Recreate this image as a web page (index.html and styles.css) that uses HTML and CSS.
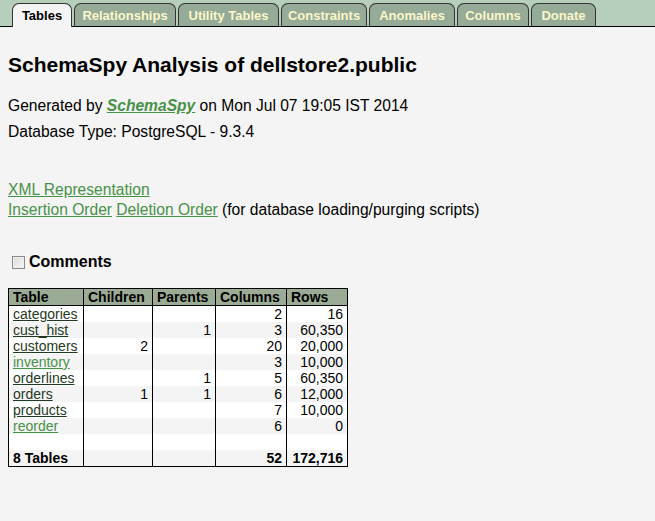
FILE: index.html
```html
<!DOCTYPE html>
<html>
<head>
<meta charset="utf-8">
<title>SchemaSpy Analysis of dellstore2.public</title>
<link rel="stylesheet" href="styles.css">
</head>
<body>
<div class="tabbar">
  <span class="tab active t-tables">Tables</span>
  <span class="tab t-rel">Relationships</span>
  <span class="tab t-util">Utility Tables</span>
  <span class="tab t-cons">Constraints</span>
  <span class="tab t-anom">Anomalies</span>
  <span class="tab t-cols">Columns</span>
  <span class="tab t-don">Donate</span>
</div>
<div class="content">
  <h2 class="title">SchemaSpy Analysis of dellstore2.public</h2>
  <div class="line gen">Generated by <a class="brand" href="#">SchemaSpy</a> on Mon Jul 07 19:05 IST 2014</div>
  <div class="line dbtype">Database Type: PostgreSQL - 9.3.4</div>
  <div class="links">
    <div><a href="#">XML Representation</a></div>
    <div><a href="#">Insertion Order</a> <a href="#">Deletion Order</a> (for database loading/purging scripts)</div>
  </div>
  <label class="comments"><span class="cb"></span>Comments</label>
  <table class="tables">
    <thead>
      <tr><th class="c1">Table</th><th class="c2">Children</th><th class="c3">Parents</th><th class="c4">Columns</th><th class="c5">Rows</th></tr>
    </thead>
    <tbody>
      <tr><td><a class="v" href="#">categories</a></td><td></td><td></td><td class="n">2</td><td class="n">16</td></tr>
      <tr class="alt"><td><a class="v" href="#">cust_hist</a></td><td></td><td class="n">1</td><td class="n">3</td><td class="n">60,350</td></tr>
      <tr><td><a class="v" href="#">customers</a></td><td class="n">2</td><td></td><td class="n">20</td><td class="n">20,000</td></tr>
      <tr class="alt"><td><a href="#">inventory</a></td><td></td><td></td><td class="n">3</td><td class="n">10,000</td></tr>
      <tr><td><a class="v" href="#">orderlines</a></td><td></td><td class="n">1</td><td class="n">5</td><td class="n">60,350</td></tr>
      <tr class="alt"><td><a class="v" href="#">orders</a></td><td class="n">1</td><td class="n">1</td><td class="n">6</td><td class="n">12,000</td></tr>
      <tr><td><a class="v" href="#">products</a></td><td></td><td></td><td class="n">7</td><td class="n">10,000</td></tr>
      <tr class="alt"><td><a href="#">reorder</a></td><td></td><td></td><td class="n">6</td><td class="n">0</td></tr>
      <tr><td>&nbsp;</td><td></td><td></td><td></td><td></td></tr>
      <tr class="alt total"><td>8 Tables</td><td></td><td></td><td class="n">52</td><td class="n">172,716</td></tr>
    </tbody>
  </table>
</div>
</body>
</html>
```
FILE: styles.css
```css
html, body {
  margin: 0;
  padding: 0;
  background: #f4f4f4;
  font-family: "Liberation Sans", Arial, sans-serif;
  color: #000;
}
.tabbar {
  background: #b5cfba;
  height: 26px;
  border-bottom: 1px solid #000;
  display: flex;
  align-items: flex-end;
  gap: 2px;
  padding-left: 12px;
}
.tab {
  height: 23px;
  box-sizing: border-box;
  padding: 4px 0 0;
  text-align: center;
  background: #95aa97;
  color: #fbf7c8;
  font-weight: bold;
  font-size: 13px;
  line-height: 16px;
  border: 1px solid #333;
  border-bottom: none;
  border-radius: 7px 7px 0 0;
}
.tab.active {
  background: #f4f4f4;
  color: #000;
  height: 24px;
  margin-bottom: -1px;
}
.t-tables { width: 60px; }
.t-rel { width: 102px; }
.t-util { width: 101px; }
.t-cons { width: 86px; }
.t-anom { width: 86px; }
.t-cols { width: 72px; }
.t-don { width: 65px; }
.content {
  padding: 0 8px;
}
.title {
  font-size: 21px;
  font-weight: bold;
  margin: 0;
  padding-top: 26px;
  line-height: 24px;
}
.line {
  font-size: 15.6px;
  line-height: 20px;
}
.gen { margin-top: 19px; }
.dbtype { margin-top: 6px; }
.links {
  font-size: 15.6px;
  line-height: 20px;
  margin-top: 38px;
}
a {
  color: #489148;
  text-decoration: underline;
}
a.brand {
  font-weight: bold;
  font-style: italic;
}
.comments {
  display: flex;
  align-items: center;
  font-weight: bold;
  font-size: 16px;
  line-height: 20px;
  margin-top: 32px;
  padding-left: 4px;
}
.cb {
  display: inline-block;
  width: 11px;
  height: 11px;
  border: 1px solid #8a8a8a;
  background: linear-gradient(135deg, #dcdcdc, #f6f6f6);
  box-shadow: inset 0 0 0 1px #f0f0f0;
  margin-right: 4px;
}
.tables {
  margin-top: 16px;
  border-collapse: collapse;
  border: 1px solid #000;
  font-size: 14px;
  line-height: 16px;
  background: #fff;
}
.tables th {
  background: #9bab96;
  text-align: left;
  font-weight: bold;
  border: 1px solid #000;
  padding: 0 4px;
  height: 16px;
}
.tables td {
  border-left: 1px solid #000;
  border-right: 1px solid #000;
  padding: 0 4px;
  height: 16px;
}
.tables .c1 { width: 66px; }
.tables .c2 { width: 60px; }
.tables .c3 { width: 54px; }
.tables .c4 { width: 62px; }
.tables .c5 { width: 52px; }
.tables td.n { text-align: right; }
.tables tr.alt td { background: #f4f4f4; }
.tables tr.total td { font-weight: bold; }
a.v { color: #1f3a22; }
```
